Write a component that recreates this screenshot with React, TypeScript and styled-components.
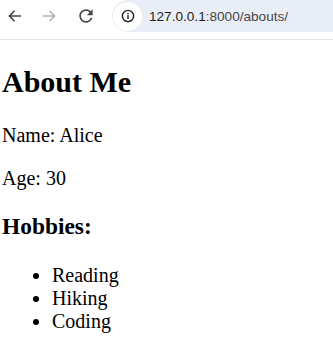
import React from "react";
import styled, { createGlobalStyle } from "styled-components";

const GlobalStyle = createGlobalStyle`
  html, body {
    margin: 0;
    padding: 0;
    background: #ffffff;
  }
  body {
    font-family: "Liberation Serif", "Times New Roman", serif;
    color: #000000;
  }
`;

const Toolbar = styled.div`
  display: flex;
  align-items: flex-start;
  height: 39px;
  border-bottom: 1px solid #e4e4e4;
  background: #ffffff;
  overflow: hidden;
`;

const NavButton = styled.div<{ $dim?: boolean; $gap?: number }>`
  display: flex;
  align-items: center;
  justify-content: center;
  width: 30px;
  height: 32px;
  margin-left: ${(p) => p.$gap ?? 0}px;
  color: ${(p) => (p.$dim ? "#b3b3b3" : "#474747")};
  flex-shrink: 0;
`;

const Omnibox = styled.div`
  flex: 1;
  display: flex;
  align-items: center;
  height: 32px;
  margin-left: 11px;
  padding-left: 1px;
  border-radius: 16px 0 0 16px;
  background: #e9eef6;
`;

const InfoChip = styled.div`
  display: flex;
  align-items: center;
  justify-content: center;
  width: 29px;
  height: 29px;
  border-radius: 50%;
  background: #ffffff;
  color: #1f1f1f;
  flex-shrink: 0;
`;

const UrlText = styled.div`
  margin-left: 7px;
  font-family: "Liberation Sans", Arial, sans-serif;
  font-size: 13.6px;
  color: #474747;
  white-space: nowrap;
`;

const Host = styled.span`
  color: #1f1f1f;
`;

const Page = styled.main`
  padding: 0 2px;
`;

const Title = styled.h1`
  font-size: 30px;
  font-weight: bold;
  margin: 24.9px 0;
`;

const Line = styled.p`
  font-size: 20px;
  margin: 20px 0;
`;

const SubTitle = styled.h3`
  font-size: 23.4px;
  font-weight: bold;
  margin: 23.4px 0;
`;

const HobbyList = styled.ul`
  font-size: 20px;
  margin: 20px 0;
  padding-left: 50px;
  list-style: disc;
`;

function BackIcon() {
  return (
    <svg width="16" height="16" viewBox="0 0 16 16" fill="none">
      <path d="M14 8H2.6M7.6 2.8L2.4 8l5.2 5.2" stroke="currentColor" strokeWidth="1.6" />
    </svg>
  );
}

function ForwardIcon() {
  return (
    <svg width="16" height="16" viewBox="0 0 16 16" fill="none">
      <path d="M2 8h11.4M8.4 2.8L13.6 8l-5.2 5.2" stroke="currentColor" strokeWidth="1.6" />
    </svg>
  );
}

function ReloadIcon() {
  return (
    <svg width="20" height="20" viewBox="0 0 24 24" fill="currentColor">
      <path d="M17.65 6.35C16.2 4.9 14.21 4 12 4c-4.42 0-7.99 3.58-7.99 8s3.57 8 7.99 8c3.73 0 6.84-2.55 7.730-6h-2.08c-.82 2.33-3.04 4-5.65 4-3.31 0-6-2.690-6-6s2.69-6 6-6c1.66 0 3.14.69 4.22 1.78L13 11h7V4l-2.35 2.35z" />
    </svg>
  );
}

function InfoIcon() {
  return (
    <svg width="14" height="14" viewBox="0 0 14 14" fill="none">
      <circle cx="7" cy="7" r="5.6" stroke="currentColor" strokeWidth="1.4" />
      <rect x="6.3" y="6.1" width="1.4" height="3.9" fill="currentColor" />
      <rect x="6.3" y="3.9" width="1.4" height="1.4" fill="currentColor" />
    </svg>
  );
}

export default function App() {
  const hobbies = ["Reading", "Hiking", "Coding"];

  return (
    <>
      <GlobalStyle />
      <Toolbar>
        <NavButton>
          <BackIcon />
        </NavButton>
        <NavButton $dim $gap={4}>
          <ForwardIcon />
        </NavButton>
        <NavButton $gap={7}>
          <ReloadIcon />
        </NavButton>
        <Omnibox>
          <InfoChip>
            <InfoIcon />
          </InfoChip>
          <UrlText>
            <Host>127.0.0.1</Host>:8000/abouts/
          </UrlText>
        </Omnibox>
      </Toolbar>
      <Page>
        <Title>About Me</Title>
        <Line>Name: Alice</Line>
        <Line>Age: 30</Line>
        <SubTitle>Hobbies:</SubTitle>
        <HobbyList>
          {hobbies.map((h) => (
            <li key={h}>{h}</li>
          ))}
        </HobbyList>
      </Page>
    </>
  );
}
